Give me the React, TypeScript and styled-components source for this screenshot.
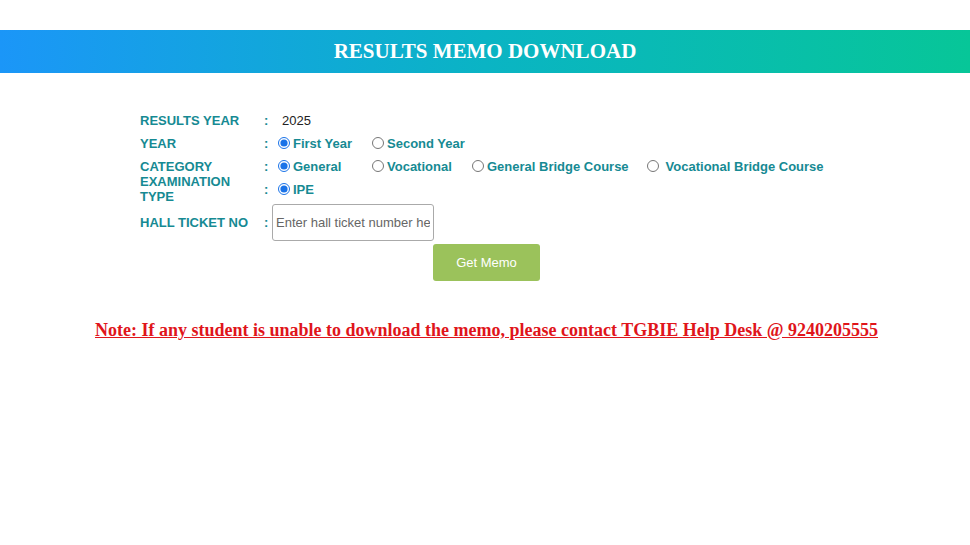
import React from "react";
import styled, { createGlobalStyle } from "styled-components";

const Global = createGlobalStyle`
  body { margin: 0; background: #fff; font-family: "Liberation Sans", Arial, sans-serif; }
`;
const Page = styled.div`padding-top: 30px; width: 970px;`;
const Banner = styled.div`
  height: 43px; display: flex; align-items: center; justify-content: center;
  background: linear-gradient(90deg, #1b96f8 0%, #0ab4c4 50%, #07c698 100%);
  color: #fff; font: bold 21px "Liberation Serif", "Times New Roman", serif;
`;
const Form = styled.div`
  padding: 37px 0 0 140px; display: grid; grid-template-columns: 124px 13px auto;
  align-items: center; row-gap: 3px;
  color: #168a93; font-weight: bold; font-size: 13px;
`;
const Label = styled.div<{ $h?: number }>`height: ${p => p.$h ?? 20}px; display: flex; align-items: center;`;
const Colon = styled(Label)``;
const Values = styled.div`display: flex; align-items: center; height: 20px;`;
const Opt = styled.label<{ $w?: number }>`
  display: flex; align-items: center; width: ${p => (p.$w ? p.$w + "px" : "auto")};
  input { margin: 0 3px 0 1px; width: 12px; height: 12px; accent-color: #1a73e8; }
`;
const Plain = styled.span`color: #222; font-weight: normal; font-size: 13px; padding-left: 5px;`;
const Input = styled.input`
  width: 162px; height: 37px; box-sizing: border-box; border: 1px solid #aaa; border-radius: 3px;
  padding: 0 3px; font: 13px "Liberation Sans", Arial, sans-serif; margin-left: -5px;
  &::placeholder { color: #666; }
`;
const BtnRow = styled.div`padding: 2px 0 0 433px;`;
const Button = styled.button`
  width: 107px; height: 37px; border: none; border-radius: 3px; background: #9bc25b;
  color: #fff; font: 13px "Liberation Sans", Arial, sans-serif;
`;
const Note = styled.div`
  text-align: center; margin-top: 39px; padding-left: 3px; color: #e0151b; text-decoration: underline;
  font: bold 18px "Liberation Serif", "Times New Roman", serif;
`;

export default function App() {
  return (
    <Page>
      <Global />
      <Banner>RESULTS MEMO DOWNLOAD</Banner>
      <Form>
        <Label>RESULTS YEAR</Label><Colon>:</Colon><Values><Plain>2025</Plain></Values>
        <Label>YEAR</Label><Colon>:</Colon>
        <Values>
          <Opt $w={94}><input type="radio" name="y" defaultChecked />First Year</Opt>
          <Opt><input type="radio" name="y" />Second Year</Opt>
        </Values>
        <Label>CATEGORY</Label><Colon>:</Colon>
        <Values>
          <Opt $w={94}><input type="radio" name="c" defaultChecked />General</Opt>
          <Opt $w={100}><input type="radio" name="c" />Vocational</Opt>
          <Opt $w={175}><input type="radio" name="c" />General Bridge Course</Opt>
          <Opt><input type="radio" name="c" />&nbsp;Vocational Bridge Course</Opt>
        </Values>
        <Label>EXAMINATION TYPE</Label><Colon>:</Colon>
        <Values><Opt><input type="radio" name="e" defaultChecked />IPE</Opt></Values>
        <Label $h={40}>HALL TICKET NO</Label><Colon $h={40}>:</Colon>
        <Values style={{ height: 40 }}><Input placeholder="Enter hall ticket number here" /></Values>
      </Form>
      <BtnRow><Button>Get Memo</Button></BtnRow>
      <Note>Note: If any student is unable to download the memo, please contact TGBIE Help Desk @ 9240205555</Note>
    </Page>
  );
}
